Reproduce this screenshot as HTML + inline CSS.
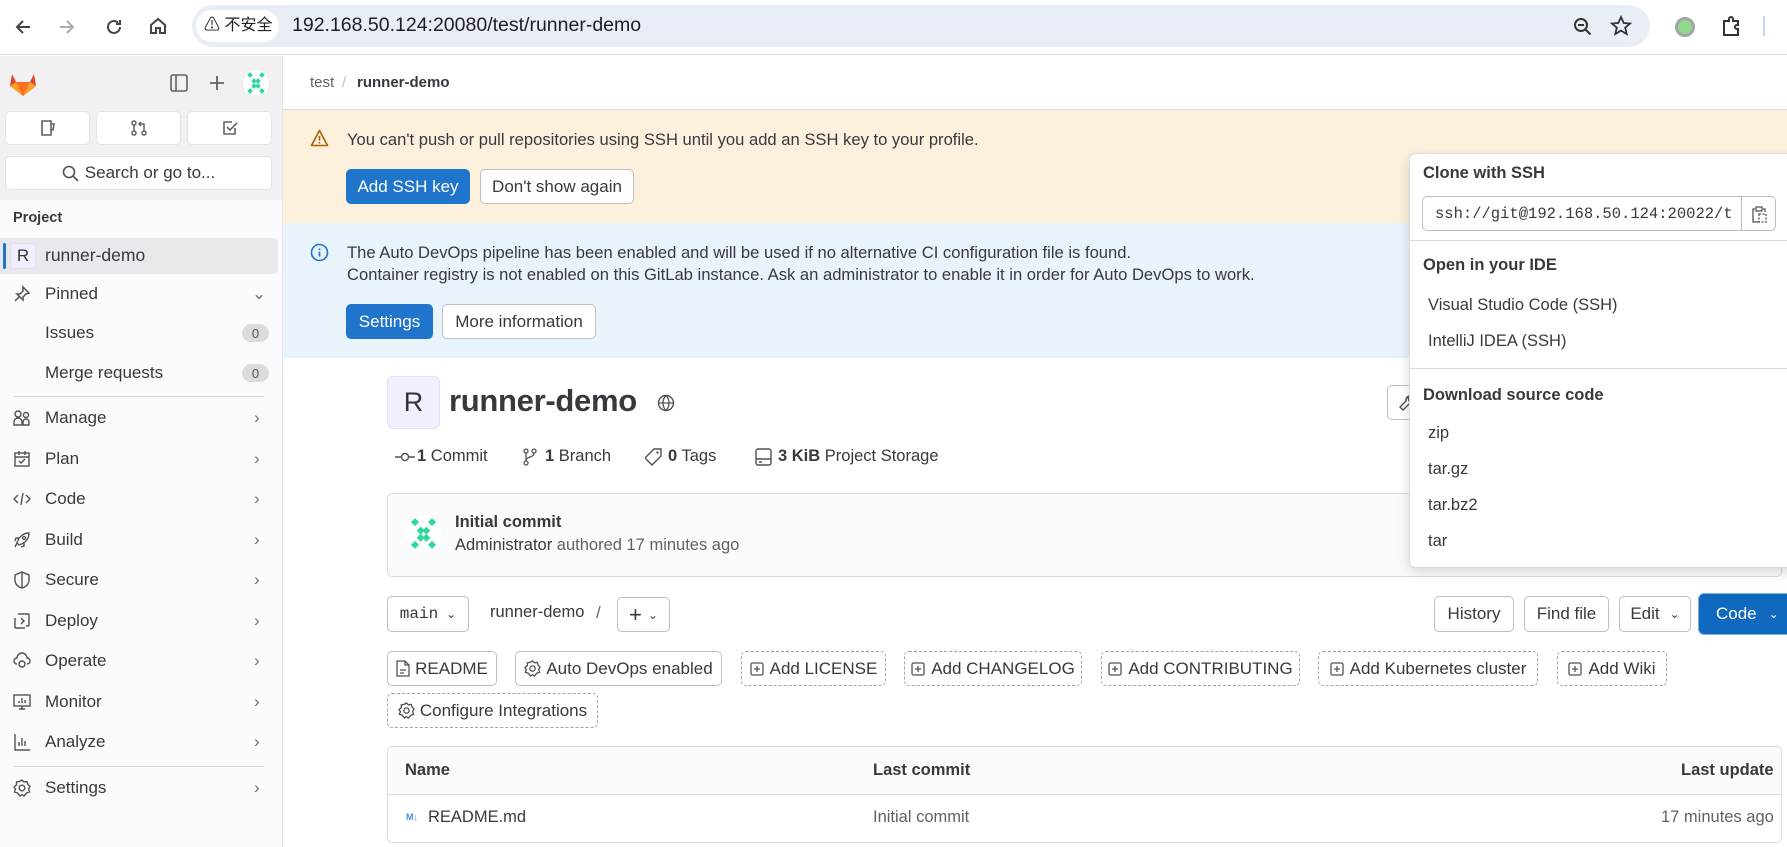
<!DOCTYPE html>
<html><head><meta charset="utf-8">
<style>
*{box-sizing:border-box;margin:0;padding:0}
body{width:1787px;height:847px;overflow:hidden;position:relative;background:#fff;font-family:"Liberation Sans","Noto Sans CJK SC",sans-serif;color:#3a383f;font-size:17px}
.a{position:absolute;white-space:nowrap}
.btn{position:absolute;border:1px solid #bfbfc3;border-radius:5px;background:#fff;display:flex;align-items:center;justify-content:center;font-size:17px;color:#3a383f;white-space:nowrap}
.blue{background:#1f75cb;border-color:#1f75cb;color:#fff}
.dash{border:1px dashed #a4a3a8}
.si{position:absolute;left:0;width:283px;height:36px;display:flex;align-items:center;font-size:17px;color:#3a383f}
.si svg{position:absolute;left:13px}
.si span{position:absolute;left:45px}
.si .ch{position:absolute;left:254px;color:#737278}
.badge{position:absolute;left:242px;width:27px;height:18px;border-radius:9px;background:#dcdcde;font-size:13px;display:flex;align-items:center;justify-content:center;color:#535158}
svg{display:block}
</style></head><body>

<!-- browser bar -->
<div class="a" style="left:0;top:0;width:1787px;height:55px;background:#fff;border-bottom:1px solid #dcdcde"></div>
<svg class="a" style="left:13px;top:17px" width="20" height="20" viewBox="0 0 20 20"><path d="M17 10H4M10 4l-6 6 6 6" stroke="#444" stroke-width="2" fill="none"/></svg>
<svg class="a" style="left:57px;top:17px" width="20" height="20" viewBox="0 0 20 20"><path d="M3 10h13M10 4l6 6-6 6" stroke="#aaa" stroke-width="2" fill="none"/></svg>
<svg class="a" style="left:104px;top:17px" width="20" height="20" viewBox="0 0 20 20"><path d="M16 10a6 6 0 1 1-2-4.5M16 3v4h-4" stroke="#444" stroke-width="2" fill="none"/></svg>
<svg class="a" style="left:148px;top:16px" width="20" height="20" viewBox="0 0 20 20"><path d="M3 9l7-6 7 6v8h-5v-5H8v5H3z" stroke="#444" stroke-width="2" fill="none"/></svg>
<div class="a" style="left:192px;top:5px;width:1458px;height:42px;border-radius:21px;background:#e9edf6"></div>
<div class="a" style="left:196px;top:10px;width:83px;height:32px;border-radius:16px;background:#fff;font-size:16px;line-height:32px;padding-left:8px;color:#222">⚠ 不安全</div>
<div class="a" style="left:292px;top:14px;font-size:19.5px;color:#1f1f1f">192.168.50.124:20080/test/runner-demo</div>
<svg class="a" style="left:1572px;top:16px" width="22" height="22" viewBox="0 0 22 22"><circle cx="9" cy="9" r="6" stroke="#333" stroke-width="2" fill="none"/><path d="M6 9h6M13.5 13.5l5 5" stroke="#333" stroke-width="2"/></svg>
<svg class="a" style="left:1610px;top:15px" width="22" height="22" viewBox="0 0 22 22"><path d="M11 2l2.7 6 6.3.5-4.8 4.2 1.5 6.3L11 15.6 5.3 19l1.5-6.3L2 8.5 8.3 8z" stroke="#333" stroke-width="1.8" fill="none"/></svg>
<div class="a" style="left:1675px;top:17px;width:20px;height:20px;border-radius:50%;background:#8fd98f;border:3px solid #a5a5a5"></div>
<svg class="a" style="left:1720px;top:15px" width="24" height="24" viewBox="0 0 24 24"><path d="M4 6h5V4a2 2 0 0 1 4 0v2h5v4h-1a2 2 0 0 0 0 4h1v6H4z" stroke="#333" stroke-width="2" fill="none"/></svg>
<div class="a" style="left:1763px;top:16px;width:2px;height:20px;background:#c5d5f5"></div>

<!-- sidebar -->
<div class="a" style="left:0;top:56px;width:283px;height:144px;background:#f1f1f3"></div>
<div class="a" style="left:0;top:200px;width:283px;height:647px;background:#fbfafd"></div>
<div class="a" style="left:282px;top:56px;width:1px;height:791px;background:#e6e6e9"></div>
<svg class="a" style="left:9px;top:70px" width="28" height="27" viewBox="0 0 28 27"><path d="M14 26L1 16 3 4l4 8h14l4-8 2 12z" fill="#e24329"/><path d="M14 26L7 12h14z" fill="#fc6d26"/><path d="M14 26l-13-10 6-4zM14 26l13-10-6-4z" fill="#fca326"/></svg>
<svg class="a" style="left:170px;top:74px" width="18" height="18" viewBox="0 0 18 18"><rect x="1" y="1" width="16" height="16" rx="2" stroke="#626168" stroke-width="1.6" fill="none"/><path d="M6 1v16" stroke="#626168" stroke-width="1.6"/></svg>
<svg class="a" style="left:208px;top:74px" width="18" height="18" viewBox="0 0 18 18"><path d="M9 2v14M2 9h14" stroke="#626168" stroke-width="1.8"/></svg>
<svg class="a" style="left:243px;top:70px" width="26" height="26" viewBox="0 0 26 26"><circle cx="13" cy="13" r="13" fill="#fff"/><g fill="#2ed89b"><rect x="5" y="3" width="4" height="4" transform="rotate(45 7 5)"/><rect x="17" y="3" width="4" height="4" transform="rotate(45 19 5)"/><rect x="9" y="9" width="4" height="4" transform="rotate(45 11 11)"/><rect x="13" y="9" width="4" height="4" transform="rotate(45 15 11)"/><rect x="9" y="14" width="4" height="4" transform="rotate(45 11 16)"/><rect x="13" y="14" width="4" height="4" transform="rotate(45 15 16)"/><rect x="5" y="19" width="4" height="4" transform="rotate(45 7 21)"/><rect x="17" y="19" width="4" height="4" transform="rotate(45 19 21)"/></g></svg>
<div class="btn" style="left:5px;top:111px;width:85px;height:34px;border-color:#e4e4e7"><svg width="18" height="18" viewBox="0 0 18 18"><path d="M3 2h9v14H3zM12 5h3l-1 6h-2" stroke="#626168" stroke-width="1.6" fill="none"/></svg></div>
<div class="btn" style="left:96px;top:111px;width:85px;height:34px;border-color:#e4e4e7"><svg width="18" height="18" viewBox="0 0 18 18"><circle cx="4" cy="4" r="2" stroke="#626168" stroke-width="1.5" fill="none"/><circle cx="4" cy="14" r="2" stroke="#626168" stroke-width="1.5" fill="none"/><circle cx="14" cy="14" r="2" stroke="#626168" stroke-width="1.5" fill="none"/><path d="M4 6v6M14 12V5H9m2-2l-2 2 2 2" stroke="#626168" stroke-width="1.5" fill="none"/></svg></div>
<div class="btn" style="left:187px;top:111px;width:85px;height:34px;border-color:#e4e4e7"><svg width="18" height="18" viewBox="0 0 18 18"><path d="M14 9v6H3V3h8" stroke="#626168" stroke-width="1.6" fill="none"/><path d="M6 8l3 3 7-7" stroke="#626168" stroke-width="1.6" fill="none"/></svg></div>
<div class="btn" style="left:5px;top:156px;width:267px;height:34px;border-color:#e4e4e7;color:#3a383f;gap:6px"><svg width="17" height="17" viewBox="0 0 17 17"><circle cx="7" cy="7" r="5.5" stroke="#535158" stroke-width="1.6" fill="none"/><path d="M11 11l5 5" stroke="#535158" stroke-width="1.6"/></svg>Search or go to...</div>
<div class="a" style="left:13px;top:210px;font-size:14.5px;font-weight:bold;color:#3a383f">Project</div>
<div class="a" style="left:0;top:238px;width:278px;height:36px;background:#e9e8ed;border-radius:0 5px 5px 0"></div>
<div class="a" style="left:3px;top:243px;width:3px;height:26px;background:#1f75cb;border-radius:2px"></div>
<div class="a" style="left:10px;top:243px;width:26px;height:26px;background:#f1effd;border:1px solid #e2e0f3;border-radius:4px;font-size:17px;text-align:center;line-height:24px;color:#333">R</div>
<div class="a" style="left:45px;top:245px;font-size:17.5px">runner-demo</div>
<div class="si" style="top:276px"><svg width="18" height="18" viewBox="0 0 18 18"><path d="M10 2l6 6-3 1-3 3 0 3-6-6 3 0 3-3zM6 12l-4 4" stroke="#535158" stroke-width="1.5" fill="none"/></svg><span>Pinned</span><span class="ch" style="left:252px">⌄</span></div>
<div class="si" style="top:315px"><span>Issues</span><div class="badge">0</div></div>
<div class="si" style="top:355px"><span>Merge requests</span><div class="badge">0</div></div>
<div class="a" style="left:13px;top:396px;width:251px;height:1px;background:#dcdcde"></div>
<div class="si" style="top:400px"><svg width="18" height="18" viewBox="0 0 18 18"><circle cx="5" cy="5" r="3" stroke="#535158" stroke-width="1.4" fill="none"/><circle cx="13" cy="6" r="2.5" stroke="#535158" stroke-width="1.4" fill="none"/><path d="M1 16v-3a4 4 0 0 1 8 0v3zM10 16v-3a3 3 0 0 1 6 0v3z" stroke="#535158" stroke-width="1.4" fill="none"/></svg><span>Manage</span><span class="ch">›</span></div>
<div class="si" style="top:441px"><svg width="18" height="18" viewBox="0 0 18 18"><rect x="2" y="3" width="14" height="13" stroke="#535158" stroke-width="1.4" fill="none"/><path d="M2 7h14M6 1v4M12 1v4M6 11l2 2 4-4" stroke="#535158" stroke-width="1.4" fill="none"/></svg><span>Plan</span><span class="ch">›</span></div>
<div class="si" style="top:481px"><svg width="18" height="18" viewBox="0 0 18 18"><path d="M5 5L1 9l4 4M13 5l4 4-4 4M10 3L8 15" stroke="#535158" stroke-width="1.4" fill="none"/></svg><span>Code</span><span class="ch">›</span></div>
<div class="si" style="top:522px"><svg width="18" height="18" viewBox="0 0 18 18"><path d="M4 12C6 5 11 2 16 2c0 5-3 10-10 12zM4 12l-2 4M7 7H3l-1 3M11 11v4l-3 1" stroke="#535158" stroke-width="1.4" fill="none"/><circle cx="11" cy="7" r="1.5" stroke="#535158" stroke-width="1.3" fill="none"/></svg><span>Build</span><span class="ch">›</span></div>
<div class="si" style="top:562px"><svg width="18" height="18" viewBox="0 0 18 18"><path d="M9 1l7 3v5c0 4-3 7-7 8-4-1-7-4-7-8V4zM9 1v16" stroke="#535158" stroke-width="1.4" fill="none"/></svg><span>Secure</span><span class="ch">›</span></div>
<div class="si" style="top:603px"><svg width="18" height="18" viewBox="0 0 18 18"><path d="M5 2h10a1 1 0 0 1 1 1v10a1 1 0 0 1-1 1h-2M2 6v9a1 1 0 0 0 1 1h9M8 6l3 3-3 3" stroke="#535158" stroke-width="1.4" fill="none"/></svg><span>Deploy</span><span class="ch">›</span></div>
<div class="si" style="top:643px"><svg width="18" height="18" viewBox="0 0 18 18"><path d="M4 12a3 3 0 0 1 0-6 5 5 0 0 1 10 0 3 3 0 0 1 0 6" stroke="#535158" stroke-width="1.4" fill="none"/><circle cx="9" cy="12" r="3" stroke="#535158" stroke-width="1.4" fill="none"/></svg><span>Operate</span><span class="ch">›</span></div>
<div class="si" style="top:684px"><svg width="18" height="18" viewBox="0 0 18 18"><rect x="1" y="2" width="16" height="11" stroke="#535158" stroke-width="1.4" fill="none"/><path d="M6 16h6M9 13v3M6 10V8M9 10V5M12 10V7" stroke="#535158" stroke-width="1.4"/></svg><span>Monitor</span><span class="ch">›</span></div>
<div class="si" style="top:724px"><svg width="18" height="18" viewBox="0 0 18 18"><path d="M2 1v16h15M6 13V9M9 13V5M12 13V8" stroke="#535158" stroke-width="1.4" fill="none"/></svg><span>Analyze</span><span class="ch">›</span></div>
<div class="a" style="left:13px;top:766px;width:251px;height:1px;background:#dcdcde"></div>
<div class="si" style="top:770px"><svg width="18" height="18" viewBox="0 0 18 18"><circle cx="9" cy="9" r="2.8" stroke="#535158" stroke-width="1.4" fill="none"/><path d="M9 1l2 2 3-0.5 1 3 2 2-1.5 2.5 1 3-3 1L11 17l-2-1.5L7 17l-2.5-3-3-1 1-3L1 8l2.5-2L3.5 3l3-0.5z" stroke="#535158" stroke-width="1.4" fill="none"/></svg><span>Settings</span><span class="ch">›</span></div>

<!-- breadcrumb -->
<div class="a" style="left:310px;top:74px;font-size:15px;color:#626168">test</div>
<div class="a" style="left:342px;top:74px;font-size:15px;color:#bfbfc3">/</div>
<div class="a" style="left:357px;top:74px;font-size:15px;font-weight:bold;color:#3a383f">runner-demo</div>
<div class="a" style="left:283px;top:109px;width:1504px;height:1px;background:#dcdcde"></div>

<!-- warning banner -->
<div class="a" style="left:283px;top:110px;width:1504px;height:113px;background:#fdf1dd"></div>
<svg class="a" style="left:310px;top:129px" width="19" height="18" viewBox="0 0 19 18"><path d="M9.5 1.5L1.5 16.5h16z" stroke="#ab6100" stroke-width="1.6" fill="none" stroke-linejoin="round"/><path d="M9.5 7v4.5M9.5 13v1.5" stroke="#ab6100" stroke-width="1.6"/></svg>
<div class="a" style="left:347px;top:130px;font-size:16.6px">You can't push or pull repositories using SSH until you add an SSH key to your profile.</div>
<div class="btn blue" style="left:346px;top:169px;width:124px;height:35px">Add SSH key</div>
<div class="btn" style="left:480px;top:169px;width:154px;height:35px">Don't show again</div>

<!-- info banner -->
<div class="a" style="left:283px;top:223px;width:1504px;height:135px;background:#e9f3fc"></div>
<svg class="a" style="left:310px;top:243px" width="19" height="19" viewBox="0 0 19 19"><circle cx="9.5" cy="9.5" r="8" stroke="#1f75cb" stroke-width="1.6" fill="none"/><path d="M9.5 8.5v5M9.5 5.5v1.5" stroke="#1f75cb" stroke-width="1.8"/></svg>
<div class="a" style="left:347px;top:243px;font-size:16.6px">The Auto DevOps pipeline has been enabled and will be used if no alternative CI configuration file is found.</div>
<div class="a" style="left:347px;top:265px;font-size:16.6px">Container registry is not enabled on this GitLab instance. Ask an administrator to enable it in order for Auto DevOps to work.</div>
<div class="btn blue" style="left:346px;top:304px;width:87px;height:35px">Settings</div>
<div class="btn" style="left:442px;top:304px;width:154px;height:35px">More information</div>

<!-- project header -->
<div class="a" style="left:387px;top:376px;width:53px;height:53px;background:#f1effd;border:1px solid #e2e0f3;border-radius:6px;font-size:27px;text-align:center;line-height:51px;color:#333">R</div>
<div class="a" style="left:449px;top:383px;font-size:31px;font-weight:bold;color:#3a383f;letter-spacing:-0.3px">runner-demo</div>
<svg class="a" style="left:657px;top:394px" width="18" height="18" viewBox="0 0 18 18"><circle cx="9" cy="9" r="7.5" stroke="#535158" stroke-width="1.4" fill="none"/><path d="M1.5 9h15M9 1.5c-4 4-4 11 0 15M9 1.5c4 4 4 11 0 15" stroke="#535158" stroke-width="1.3" fill="none"/></svg>
<div class="btn" style="left:1387px;top:385px;width:40px;height:35px"><svg width="18" height="18" viewBox="0 0 18 18"><path d="M12 2a4 4 0 0 0-4 5L2 13l3 3 6-6a4 4 0 0 0 5-4l-2 2-3-1-1-3z" stroke="#535158" stroke-width="1.4" fill="none"/></svg></div>

<svg class="a" style="left:395px;top:449px" width="20" height="16" viewBox="0 0 20 16"><circle cx="10" cy="8" r="3.5" stroke="#535158" stroke-width="1.4" fill="none"/><path d="M0 8h6M14 8h6" stroke="#535158" stroke-width="1.4"/></svg>
<div class="a" style="left:417px;top:447px;font-size:16.5px"><b>1</b> Commit</div>
<svg class="a" style="left:522px;top:448px" width="16" height="18" viewBox="0 0 16 18"><circle cx="4" cy="3" r="2" stroke="#535158" stroke-width="1.3" fill="none"/><circle cx="12" cy="3" r="2" stroke="#535158" stroke-width="1.3" fill="none"/><circle cx="4" cy="15" r="2" stroke="#535158" stroke-width="1.3" fill="none"/><path d="M4 5v8M12 5c0 5-8 3-8 8" stroke="#535158" stroke-width="1.3" fill="none"/></svg>
<div class="a" style="left:545px;top:447px;font-size:16.5px"><b>1</b> Branch</div>
<svg class="a" style="left:645px;top:448px" width="18" height="18" viewBox="0 0 18 18"><path d="M9 1h7v7l-9 9-7-7z" stroke="#535158" stroke-width="1.4" fill="none"/><circle cx="12.5" cy="4.5" r="1.2" fill="#535158"/></svg>
<div class="a" style="left:668px;top:447px;font-size:16.5px"><b>0</b> Tags</div>
<svg class="a" style="left:755px;top:448px" width="17" height="18" viewBox="0 0 17 18"><rect x="1" y="1" width="15" height="16" rx="2" stroke="#535158" stroke-width="1.4" fill="none"/><path d="M1 11h15M4 14h3" stroke="#535158" stroke-width="1.4"/></svg>
<div class="a" style="left:778px;top:447px;font-size:16.5px"><b>3 KiB</b> Project Storage</div>

<!-- commit box -->
<div class="a" style="left:387px;top:493px;width:1395px;height:84px;background:#fbfafd;border:1px solid #dcdcde;border-radius:5px"></div>
<svg class="a" style="left:405px;top:515px" width="37" height="37" viewBox="0 0 26 26"><circle cx="13" cy="13" r="13" fill="#fff"/><g fill="#2ed89b"><rect x="5" y="3" width="4" height="4" transform="rotate(45 7 5)"/><rect x="17" y="3" width="4" height="4" transform="rotate(45 19 5)"/><rect x="9" y="9" width="4" height="4" transform="rotate(45 11 11)"/><rect x="13" y="9" width="4" height="4" transform="rotate(45 15 11)"/><rect x="9" y="14" width="4" height="4" transform="rotate(45 11 16)"/><rect x="13" y="14" width="4" height="4" transform="rotate(45 15 16)"/><rect x="5" y="19" width="4" height="4" transform="rotate(45 7 21)"/><rect x="17" y="19" width="4" height="4" transform="rotate(45 19 21)"/></g></svg>
<div class="a" style="left:455px;top:513px;font-size:16.5px;font-weight:bold">Initial commit</div>
<div class="a" style="left:455px;top:536px;font-size:16.5px;color:#626168"><span style="color:#3a383f">Administrator</span> authored 17 minutes ago</div>

<!-- branch row -->
<div class="btn" style="left:387px;top:596px;width:82px;height:36px;font-family:'Liberation Mono',monospace;font-size:16px;gap:8px">main <span style="font-family:'Liberation Sans';font-size:12px">⌄</span></div>
<div class="a" style="left:490px;top:603px;font-size:16.5px">runner-demo</div>
<div class="a" style="left:596px;top:603px;font-size:17px;color:#626168">/</div>
<div class="btn" style="left:617px;top:597px;width:53px;height:35px;font-size:22px;gap:6px">+<span style="font-size:12px">⌄</span></div>

<div class="btn" style="left:1434px;top:596px;width:80px;height:36px">History</div>
<div class="btn" style="left:1524px;top:596px;width:85px;height:36px">Find file</div>
<div class="btn" style="left:1619px;top:596px;width:72px;height:36px;gap:10px">Edit <span style="font-size:12px">⌄</span></div>
<div class="btn blue" style="left:1699px;top:594px;width:95px;height:40px;border:2px solid #1068bf;box-shadow:0 0 0 1px #7cb1e6;background:#1068bf;justify-content:flex-start;padding-left:15px;gap:12px">Code <span style="font-size:12px">⌄</span></div>

<!-- quick actions -->
<div class="btn" style="left:387px;top:651px;width:110px;height:35px;gap:5px"><svg width="14" height="17" viewBox="0 0 14 17"><path d="M1 1h8l4 4v11H1zM9 1v4h4M4 10h6M4 13h4" stroke="#535158" stroke-width="1.3" fill="none"/></svg>README</div>
<div class="btn" style="left:515px;top:651px;width:207px;height:35px;gap:5px"><svg width="17" height="17" viewBox="0 0 18 18"><circle cx="9" cy="9" r="2.8" stroke="#535158" stroke-width="1.4" fill="none"/><path d="M9 1l2 2 3-0.5 1 3 2 2-1.5 2.5 1 3-3 1L11 17l-2-1.5L7 17l-2.5-3-3-1 1-3L1 8l2.5-2L3.5 3l3-0.5z" stroke="#535158" stroke-width="1.4" fill="none"/></svg>Auto DevOps enabled</div>
<div class="btn dash" style="left:741px;top:651px;width:145px;height:35px;gap:6px"><svg width="14" height="14" viewBox="0 0 14 14"><rect x="1" y="1" width="12" height="12" rx="1.5" stroke="#535158" stroke-width="1.3" fill="none"/><path d="M7 4v6M4 7h6" stroke="#535158" stroke-width="1.3"/></svg>Add LICENSE</div>
<div class="btn dash" style="left:904px;top:651px;width:178px;height:35px;gap:6px"><svg width="14" height="14" viewBox="0 0 14 14"><rect x="1" y="1" width="12" height="12" rx="1.5" stroke="#535158" stroke-width="1.3" fill="none"/><path d="M7 4v6M4 7h6" stroke="#535158" stroke-width="1.3"/></svg>Add CHANGELOG</div>
<div class="btn dash" style="left:1101px;top:651px;width:199px;height:35px;gap:6px"><svg width="14" height="14" viewBox="0 0 14 14"><rect x="1" y="1" width="12" height="12" rx="1.5" stroke="#535158" stroke-width="1.3" fill="none"/><path d="M7 4v6M4 7h6" stroke="#535158" stroke-width="1.3"/></svg>Add CONTRIBUTING</div>
<div class="btn dash" style="left:1318px;top:651px;width:220px;height:35px;gap:6px"><svg width="14" height="14" viewBox="0 0 14 14"><rect x="1" y="1" width="12" height="12" rx="1.5" stroke="#535158" stroke-width="1.3" fill="none"/><path d="M7 4v6M4 7h6" stroke="#535158" stroke-width="1.3"/></svg>Add Kubernetes cluster</div>
<div class="btn dash" style="left:1557px;top:651px;width:110px;height:35px;gap:6px"><svg width="14" height="14" viewBox="0 0 14 14"><rect x="1" y="1" width="12" height="12" rx="1.5" stroke="#535158" stroke-width="1.3" fill="none"/><path d="M7 4v6M4 7h6" stroke="#535158" stroke-width="1.3"/></svg>Add Wiki</div>
<div class="btn dash" style="left:387px;top:693px;width:211px;height:35px;gap:5px"><svg width="17" height="17" viewBox="0 0 18 18"><circle cx="9" cy="9" r="2.8" stroke="#535158" stroke-width="1.4" fill="none"/><path d="M9 1l2 2 3-0.5 1 3 2 2-1.5 2.5 1 3-3 1L11 17l-2-1.5L7 17l-2.5-3-3-1 1-3L1 8l2.5-2L3.5 3l3-0.5z" stroke="#535158" stroke-width="1.4" fill="none"/></svg>Configure Integrations</div>

<!-- file table -->
<div class="a" style="left:387px;top:746px;width:1395px;height:97px;border:1px solid #dcdcde;border-radius:5px;overflow:hidden">
  <div style="position:absolute;left:0;top:0;width:100%;height:48px;background:#fbfafd;border-bottom:1px solid #dcdcde"></div>
</div>
<div class="a" style="left:405px;top:761px;font-size:16.5px;font-weight:bold">Name</div>
<div class="a" style="left:873px;top:761px;font-size:16.5px;font-weight:bold">Last commit</div>
<div class="a" style="left:1681px;top:761px;font-size:16.5px;font-weight:bold">Last update</div>
<div class="a" style="left:406px;top:812px;font-size:9px;font-weight:bold;color:#428fdc">M↓</div>
<div class="a" style="left:428px;top:808px;font-size:16.5px">README.md</div>
<div class="a" style="left:873px;top:808px;font-size:16.5px;color:#626168">Initial commit</div>
<div class="a" style="left:1661px;top:808px;font-size:16.5px;color:#626168">17 minutes ago</div>

<!-- dropdown -->
<div class="a" style="left:1409px;top:153px;width:390px;height:415px;background:#fff;border:1px solid #dcdcde;border-radius:6px;box-shadow:0 4px 12px rgba(0,0,0,.15)"></div>
<div class="a" style="left:1423px;top:164px;font-size:16.5px;font-weight:bold">Clone with SSH</div>
<div class="a" style="left:1422px;top:196px;width:354px;height:35px;border:1px solid #bfbfc3;border-radius:5px;overflow:hidden">
  <div style="position:absolute;left:12px;top:8px;font-family:'Liberation Mono',monospace;font-size:15.5px;color:#3a383f;white-space:nowrap;width:298px;overflow:hidden">ssh://git@192.168.50.124:20022/t</div>
  <div style="position:absolute;left:318px;top:0;width:1px;height:35px;background:#bfbfc3"></div>
  <svg style="position:absolute;left:328px;top:9px" width="16" height="17" viewBox="0 0 16 17"><path d="M4 3H2v13h6M12 3h2v3M5 1h6v4H5z" stroke="#535158" stroke-width="1.3" fill="none"/><rect x="8" y="8" width="7" height="8" stroke="#535158" stroke-width="1.3" fill="none" stroke-dasharray="2 1.5"/></svg>
</div>
<div class="a" style="left:1410px;top:240px;width:389px;height:1px;background:#dcdcde"></div>
<div class="a" style="left:1423px;top:256px;font-size:16.5px;font-weight:bold">Open in your IDE</div>
<div class="a" style="left:1428px;top:296px;font-size:16.5px">Visual Studio Code (SSH)</div>
<div class="a" style="left:1428px;top:332px;font-size:16.5px">IntelliJ IDEA (SSH)</div>
<div class="a" style="left:1410px;top:368px;width:389px;height:1px;background:#dcdcde"></div>
<div class="a" style="left:1423px;top:386px;font-size:16.5px;font-weight:bold">Download source code</div>
<div class="a" style="left:1428px;top:424px;font-size:16.5px">zip</div>
<div class="a" style="left:1428px;top:460px;font-size:16.5px">tar.gz</div>
<div class="a" style="left:1428px;top:496px;font-size:16.5px">tar.bz2</div>
<div class="a" style="left:1428px;top:532px;font-size:16.5px">tar</div>
</body></html>
